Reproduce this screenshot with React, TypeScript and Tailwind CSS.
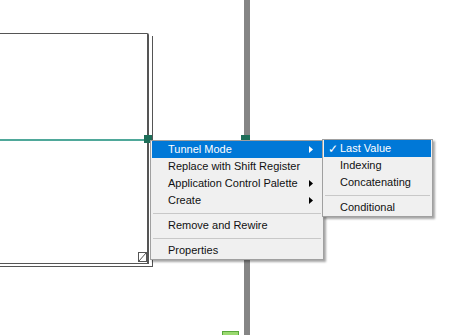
import React from 'react';

const font = { fontFamily: '"Liberation Sans", Arial, sans-serif' };

type Item = { label: string; arrow?: boolean; active?: boolean; check?: boolean } | 'sep';

const mainItems: Item[] = [
  { label: 'Tunnel Mode', arrow: true, active: true },
  { label: 'Replace with Shift Register' },
  { label: 'Application Control Palette', arrow: true },
  { label: 'Create', arrow: true },
  'sep',
  { label: 'Remove and Rewire' },
  'sep',
  { label: 'Properties' },
];

const subItems: Item[] = [
  { label: 'Last Value', active: true, check: true },
  { label: 'Indexing' },
  { label: 'Concatenating' },
  'sep',
  { label: 'Conditional' },
];

const Arrow = ({ white }: { white?: boolean }) => (
  <svg width="4" height="7" viewBox="0 0 4 7" className="shrink-0">
    <path d="M0 0 L4 3.5 L0 7 Z" fill={white ? '#ffffff' : '#000000'} />
  </svg>
);

const Menu = ({ items, width }: { items: Item[]; width: string }) => (
  <div
    className={`${width} flex flex-col border border-[#a0a0a0] bg-[#f0f0f0] text-[11px] text-[#111] shadow-[2px_2px_2px_rgba(0,0,0,0.35)]`}
    style={font}
  >
    {items.map((it, i) =>
      it === 'sep' ? (
        <div key={i} className="flex h-[8px] items-center px-[2px]">
          <div className="h-px flex-1 bg-[#c8c8c8]" />
        </div>
      ) : (
        <div
          key={i}
          className={`mx-px flex h-[17px] items-center whitespace-nowrap pr-[9px] ${it.active ? 'bg-[#0078d7] text-white' : ''}`}
        >
          <span className="flex w-[16px] shrink-0 justify-center pl-[2px] text-[12px]">
            {it.check ? '✓' : ''}
          </span>
          <span className="flex-1 leading-none">{it.label}</span>
          {it.arrow && <Arrow white={it.active} />}
        </div>
      )
    )}
  </div>
);

export default function App() {
  return (
    <div className="relative h-[335px] w-[474px] overflow-hidden bg-white">
      {/* loop structure frame */}
      <div className="absolute left-[-10px] top-[36px] h-[231px] w-[163px] border-r border-b border-[#555] bg-white" />
      <div className="absolute left-[-10px] top-[33px] h-[231px] w-[159px] rounded-tr-[2px] border-t border-r-2 border-b border-[#555] bg-white">
        <div className="absolute bottom-[1px] right-[0px] h-[10px] w-[9px] border border-[#555] bg-white">
          <svg width="7" height="8" className="absolute left-0 top-0">
            <line x1="0" y1="8" x2="7" y2="0" stroke="#555" strokeWidth="1" />
          </svg>
        </div>
      </div>

      {/* teal wire */}
      <div className="absolute left-0 top-[139px] h-[2px] w-[146px] bg-[#4fa89a]" />
      <div className="absolute left-[144px] top-[135px] h-[8px] w-[8px] bg-[#1d6e58]" />

      {/* grey wire */}
      <div className="absolute left-[244px] top-0 h-[335px] w-[6px] bg-[#858585]" />
      <div className="absolute left-[241px] top-[135px] h-[6px] w-[9px] bg-[#1d6e58]" />

      {/* green terminal at bottom */}
      <div className="absolute left-[222px] top-[331px] h-[6px] w-[17px] border border-[#5aa83c] bg-[#9ad96f]" />

      {/* context menu + submenu */}
      <div className="absolute left-[150px] top-[140px] flex items-start">
        <Menu items={mainItems} width="w-[174px]" />
        <div className="-ml-[2px] -mt-px">
          <Menu items={subItems} width="w-[111px]" />
        </div>
      </div>
    </div>
  );
}
